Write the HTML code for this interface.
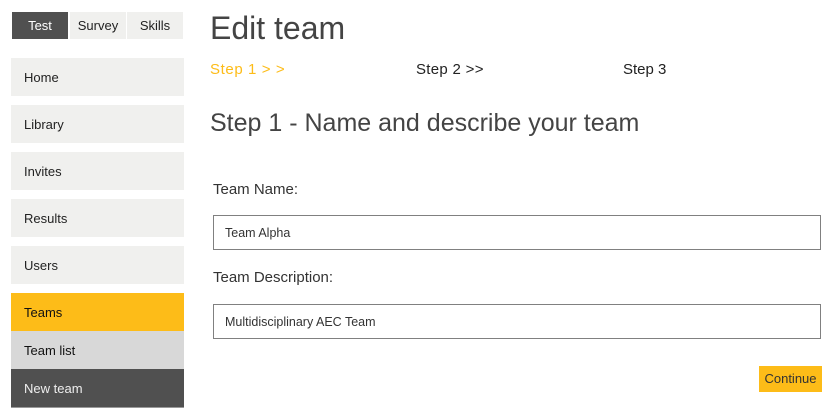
<!DOCTYPE html>
<html><head><style>
body{margin:0;width:840px;height:416px;background:#fff;font-family:"Liberation Sans",sans-serif;position:relative;overflow:hidden}
div,span{position:absolute;box-sizing:border-box}
.tab{top:12px;height:27px;font-size:13px;text-align:center;line-height:27px;background:#f0f0ee;color:#222}
.nav{left:11px;width:173px;height:38px;background:#f0f0ee;font-size:13px;line-height:40px;padding-left:13px;color:#222}
.inp{left:213px;width:608px;height:35px;border:1px solid #808080;font-size:12.5px;line-height:35px;padding-left:11px;color:#333}
.lbl{left:213px;font-size:15px;color:#333}
</style></head><body>
<div class="tab" style="left:12px;width:56px;background:#505050;color:#fff">Test</div>
<div class="tab" style="left:70px;width:56px">Survey</div>
<div class="tab" style="left:127px;width:56px">Skills</div>
<div class="nav" style="top:58px">Home</div>
<div class="nav" style="top:105px">Library</div>
<div class="nav" style="top:152px">Invites</div>
<div class="nav" style="top:199px">Results</div>
<div class="nav" style="top:246px">Users</div>
<div class="nav" style="top:293px;background:#fdbc18;color:#111">Teams</div>
<div class="nav" style="top:331px;background:#d8d8d8;color:#111">Team list</div>
<div class="nav" style="top:369px;background:#505050;color:#eee">New team</div>
<div style="left:11px;top:407px;width:173px;height:1px;background:#999"></div>
<div style="left:210px;top:10px;font-size:32px;color:#444">Edit team</div>
<div style="left:210px;top:61px;font-size:15px;color:#fdbc18;letter-spacing:0.6px">Step 1 &gt; &gt;</div>
<div style="left:416px;top:61px;font-size:15px;color:#222;letter-spacing:0.3px">Step 2 &gt;&gt;</div>
<div style="left:623px;top:61px;font-size:15px;color:#222">Step 3</div>
<div style="left:210px;top:109px;font-size:25px;color:#444">Step 1 - Name and describe your team</div>
<div class="lbl" style="top:181px">Team Name:</div>
<div class="inp" style="top:215px">Team Alpha</div>
<div class="lbl" style="top:269px">Team Description:</div>
<div class="inp" style="top:304px">Multidisciplinary AEC Team</div>
<div style="left:759px;top:366px;width:63px;height:26px;background:#fdbc18;font-size:13px;line-height:26px;text-align:center;color:#333">Continue</div>
</body></html>
